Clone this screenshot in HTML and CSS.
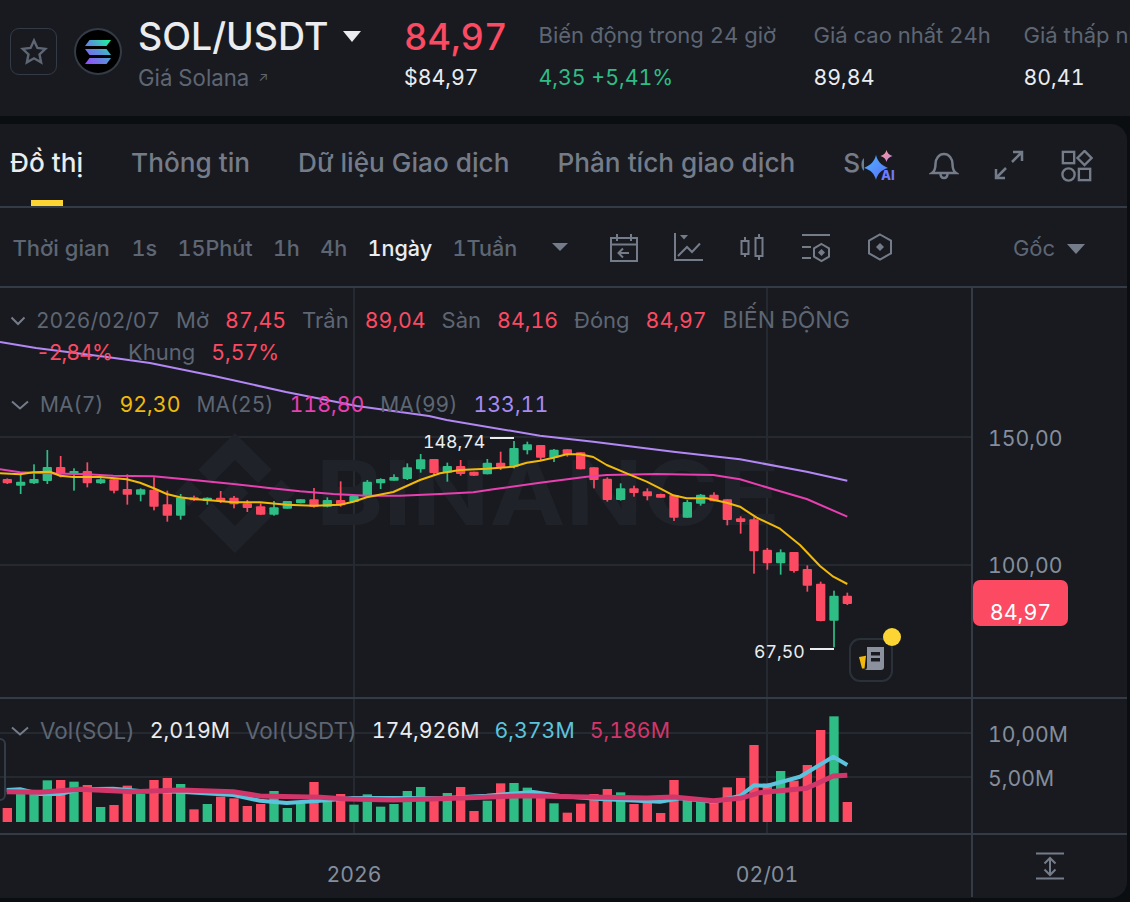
FILE: index.html
```html
<!DOCTYPE html>
<html lang="vi">
<head>
    <meta charset="UTF-8">
    <meta name="viewport" content="width=device-width, initial-scale=1.0">
    <title>SOL/USDT</title>
    <link rel="stylesheet" href="styles.css">
</head>
<body>
    <header class="ticker">
        <button class="fav">
            <svg viewBox="0 0 28 28" width="28" height="28"><path class="ico ico-thick" d="M14 2.500l3.400 7.400 8 .9-5.900 5.500 1.600 8-7.100-4-7.100 4 1.600-8-5.900-5.500 8-.9z"/></svg>
        </button>
        <div class="coin">
            <svg viewBox="0 0 26 24" width="26" height="24">
                <defs>
                    <linearGradient id="sol" x1="0" y1="1" x2="1" y2="0">
                        <stop offset="0" stop-color="#9945ff"/>
                        <stop offset="0.55" stop-color="#5497d5"/>
                        <stop offset="1" stop-color="#19fb9b"/>
                    </linearGradient>
                </defs>
                <path fill="url(#sol)" d="M4.500 0H26l-4.500 6H0zM0 9h21.500L26 15H4.500zM4.500 18H26l-4.500 6H0z"/>
            </svg>
        </div>
        <div class="col col-name">
            <div class="pair">SOL/USDT <i class="caret caret-lg"></i></div>
            <div class="sub">Giá Solana <span class="ext">↗</span></div>
        </div>
        <div class="col col-price">
            <div class="last">84,97</div>
            <div class="fiat">$84,97</div>
        </div>
        <div class="col stat stat-change">
            <div class="stat-label">Biến động trong 24 giờ</div>
            <div class="stat-val green">4,35 +5,41%</div>
        </div>
        <div class="col stat stat-high">
            <div class="stat-label">Giá cao nhất 24h</div>
            <div class="stat-val">89,84</div>
        </div>
        <div class="col stat">
            <div class="stat-label">Giá thấp nhất 24h</div>
            <div class="stat-val">80,41</div>
        </div>
    </header>

    <main class="panel">
        <nav class="tabs">
            <div class="tab-list">
                <a class="tab active">Đồ thị</a>
                <a class="tab">Thông tin</a>
                <a class="tab">Dữ liệu Giao dịch</a>
                <a class="tab">Phân tích giao dịch</a>
                <a class="tab">Square</a>
            </div>
            <svg class="ai" viewBox="0 0 38 34" width="38" height="34">
                <defs>
                    <linearGradient id="aiBlue" x1="0" y1="0" x2="1" y2="1">
                        <stop offset="0" stop-color="#4fb4ff"/>
                        <stop offset="1" stop-color="#5a6dfb"/>
                    </linearGradient>
                    <linearGradient id="aiPink" x1="0" y1="0" x2="1" y2="1">
                        <stop offset="0" stop-color="#f9a27c"/>
                        <stop offset="1" stop-color="#c77cf5"/>
                    </linearGradient>
                </defs>
                <path fill="url(#aiBlue)" d="M13 5c1.500 6 5 10 12 13-7 2-10.500 6-12 12-1.500-6-5-10-12-12 7-3 10.500-7 12-13z"/>
                <path fill="url(#aiPink)" d="M23.500 0c.7 3 2.500 5 6 6-3.500 1-5.300 3-6 6-.7-3-2.500-5-6-6 3.500-1 5.300-3 6-6z"/>
                <text class="ai-text" x="18" y="30">AI</text>
            </svg>
            <svg class="tab-ico tab-bell" viewBox="0 0 30 30" width="30" height="30">
                <path class="ico" d="M3 23c3-2 3.500-4.500 3.500-9C6.500 8.500 10 4 15 4s8.500 4.500 8.500 10c0 4.500.5 7 3.500 9zM11.500 23.500c0 6 7 6 7 0"/>
            </svg>
            <svg class="tab-ico tab-expand" viewBox="0 0 30 30" width="30" height="30">
                <path class="ico" d="M2 28l10-10M18 12L28 2M19 2h9v9M2 19v9h9"/>
            </svg>
            <svg class="tab-ico tab-apps" viewBox="0 0 34 34" width="32" height="32">
                <rect class="ico" x="2" y="2" width="12" height="12"/>
                <path class="ico" d="M25 1l7.500 7.500L25 16l-7.500-7.500z"/>
                <circle class="ico" cx="8" cy="26" r="6.500"/>
                <rect class="ico" x="19" y="20" width="12" height="12"/>
            </svg>
        </nav>

        <div class="toolbar">
            <span class="range range-label">Thời gian</span>
            <span class="range">1s</span>
            <span class="range">15Phút</span>
            <span class="range">1h</span>
            <span class="range">4h</span>
            <span class="range active">1ngày</span>
            <span class="range">1Tuần</span>
            <i class="caret caret-more"></i>
            <div class="tools">
                <svg viewBox="0 0 32 32" width="32" height="32">
                    <path class="ico" d="M3 7h26v23H3zM3 13.500h26M9 3v7M23 3v7M21 22H11M15 17.500L10.500 22l4.500 4.500"/>
                </svg>
                <svg viewBox="0 0 32 32" width="32" height="32">
                    <path class="ico" d="M3 2v27h28M6 25l9-9 5 5 8-8.500"/>
                    <path class="ico-fill" d="M8 4h8l-4 4.500z"/>
                </svg>
                <svg viewBox="0 0 32 32" width="32" height="32">
                    <path class="ico" d="M9 6v20M23 3v26"/>
                    <rect class="ico ico-bg" x="5.500" y="10" width="7" height="13"/>
                    <rect class="ico ico-bg" x="19.500" y="7" width="7" height="18"/>
                </svg>
                <svg viewBox="0 0 32 32" width="32" height="32">
                    <path class="ico" d="M2 4h28M2 16h9M2 27h9M21.500 13l7.500 4.300v8.400L21.500 30 14 25.700v-8.400z"/>
                    <path class="ico-fill" d="M21.500 18l3.500 3.500-3.500 3.500-3.500-3.500z"/>
                </svg>
                <svg viewBox="0 0 32 32" width="32" height="32">
                    <path class="ico" d="M16 3.500l11 6.200v12.600l-11 6.200-11-6.200V9.700z"/>
                    <path class="ico-fill" d="M16 12l4 4-4 4-4-4z"/>
                </svg>
            </div>
            <div class="scale">Gốc <i class="caret caret-scale"></i></div>
        </div>

        <section class="chart">
            <svg id="plot" class="plot" viewBox="0 288 1127 610" width="1127" height="610"></svg>

            <div class="legend legend-ohlc">
                <svg class="chev" viewBox="0 0 16 10" width="16" height="10"><path class="ico" d="M1.500 1.500L8 8l6.500-6.500"/></svg>
                <div class="legend-items">
                    <span class="num">2026/02/07</span><span>Mở</span><b class="red">87,45</b><span>Trần</span><b class="red">89,04</b><span>Sàn</span><b class="red">84,16</b><span>Đóng</span><b class="red">84,97</b><span class="wide">BIẾN ĐỘNG</span>
                    <b class="red pct">-2,84%</b><span>Khung</span><b class="red">5,57%</b>
                </div>
            </div>
            <div class="legend legend-ma">
                <svg class="chev" viewBox="0 0 20 10" width="20" height="10"><path class="ico" d="M2 1.500L10 8.500l8-7"/></svg>
                <div class="legend-items">
                    <span class="num">MA(7)</span><b class="ma7">92,30</b><span class="num">MA(25)</span><b class="ma25">118,80</b><span class="num">MA(99)</span><b class="ma99">133,11</b>
                </div>
            </div>
            <div class="legend legend-vol">
                <svg class="chev" viewBox="0 0 20 10" width="20" height="10"><path class="ico" d="M2 1.500L10 8.500l8-7"/></svg>
                <div class="legend-items">
                    <span class="vol-label">Vol(SOL)</span><b class="white">2,019M</b><span class="vol-label">Vol(USDT)</span><b class="white">174,926M</b><b class="vol-a">6,373M</b><b class="vol-b">5,186M</b>
                </div>
            </div>

            <div class="price-tag">84,97</div>
            <div class="news-btn">
                <svg viewBox="0 0 26 26" width="26" height="26">
                    <path fill="#f0b90b" d="M1 10l7-1.200-1.500 12.700H4z"/>
                    <path fill="#8b929e" d="M9 0h17v20c0 2-1 3-3 3H6c2 0 3-1 3-3z"/>
                    <path fill="#181a20" d="M13 5h9v3.500h-9zM13 11h9v3.500h-9z"/>
                </svg>
                <i class="news-dot"></i>
            </div>
        </section>
    </main>
    <script src="chart.js"></script>
</body>
</html>
```

FILE: styles.css
```css
* {
    box-sizing: border-box;
}

body {
    margin: 0;
    width: 1130px;
    height: 902px;
    overflow: hidden;
    background: #0b0e11;
    font-family: 'Inter', 'Noto Sans', sans-serif;
    font-variant-numeric: tabular-nums;
    color: #eaecef;
}

.green { color: #2ebd85; }
.red { color: #fb4a62; }
.white { color: #eaecef; }

.ico {
    fill: none;
    stroke: #757c89;
    stroke-width: 2;
}

.ico-thick {
    stroke: #5e6673;
    stroke-width: 2.4;
}

.ico-bg {
    fill: #181a20;
}

.ico-fill {
    fill: #757c89;
}

.caret {
    display: inline-block;
    width: 0;
    height: 0;
    border-style: solid;
    border-color: #757c89 transparent transparent;
}

/* top ticker */
.ticker {
    display: flex;
    height: 116px;
    background: #181a20;
    padding: 28px 0 0 10px;
    overflow: hidden;
    white-space: nowrap;
}

.fav {
    width: 47px;
    height: 47px;
    flex: none;
    padding: 0;
    background: none;
    border: 1px solid #333b47;
    border-radius: 9px;
    display: flex;
    align-items: center;
    justify-content: center;
}

.coin {
    width: 48px;
    height: 47px;
    flex: none;
    margin-left: 17px;
    border: 2px solid #333b47;
    border-radius: 50%;
    background: #000;
    display: flex;
    align-items: center;
    justify-content: center;
}

.col {
    margin-top: -14px;
    flex: none;
}

.col-name {
    margin-left: 16px;
    width: 266px;
}

.pair {
    height: 44px;
    font-size: 37.5px;
    font-weight: 500;
    line-height: 46px;
    color: #eaecef;
}

.caret-lg {
    border-width: 11px 9px 0;
    border-top-color: #eaecef;
    margin-left: 4px;
    vertical-align: 8px;
}

.sub, .fiat, .stat-val {
    margin-top: 5px;
    height: 28px;
    line-height: 28px;
    font-size: 21.3px;
}

.sub {
    color: #5e6673;
    font-size: 22.2px;
}

.ext {
    font-size: 13px;
    margin-left: 3px;
    vertical-align: 4px;
}

.col-price {
    width: 134.500px;
}

.last {
    height: 44px;
    font-size: 36.2px;
    font-weight: 500;
    line-height: 46px;
    color: #fb4a62;
}

.stat-change {
    width: 275px;
}

.stat-high {
    width: 210px;
}

.stat-label {
    height: 44px;
    line-height: 42px;
    font-size: 22px;
    color: #5e6673;
}

/* panel */
.panel {
    width: 1127px;
    height: 774px;
    margin-top: 8px;
    background: #181a20;
    border-radius: 0 16px 16px 0;
    overflow: hidden;
}

.tabs {
    display: flex;
    align-items: flex-start;
    height: 84px;
    border-bottom: 2px solid #333b47;
}

.tab-list {
    display: flex;
    gap: 48px;
    width: 864px;
    flex: none;
    padding-left: 10px;
    overflow: hidden;
    white-space: nowrap;
}

.tab {
    position: relative;
    height: 82px;
    padding-top: 23px;
    font-size: 26.2px;
    font-weight: 500;
    line-height: 32px;
    color: #757c89;
}

.tab.active {
    color: #eaecef;
}

.tab.active::after {
    content: "";
    position: absolute;
    left: 21px;
    bottom: 0;
    width: 32px;
    height: 6px;
    background: #fcd535;
}

.ai {
    flex: none;
    margin: 26px 0 0 -1px;
}

.ai-text {
    font-size: 13px;
    font-weight: 800;
    fill: #6f7bf7;
}

.tab-ico .ico {
    stroke-width: 2.5;
}

.tab-bell {
    margin: 26px 0 0 28px;
}

.tab-expand {
    margin: 26px 0 0 35px;
}

.tab-apps {
    margin: 26px 0 0 37px;
}

.toolbar {
    display: flex;
    align-items: center;
    gap: 20.300px;
    height: 80px;
    padding: 0 42px 0 12.500px;
    border-bottom: 2px solid #333b47;
    font-size: 21.6px;
    font-weight: 500;
    color: #5e6673;
    white-space: nowrap;
}

.range {
    padding-top: 1px;
}

.range-label {
    margin-right: 1.500px;
    font-size: 22px;
}

.range.active {
    color: #eaecef;
}

.caret-more {
    border-width: 8px 8px 0;
    margin-left: 14px;
}

.tools {
    display: flex;
    gap: 32px;
    margin-left: 20px;
}

.scale {
    margin-left: auto;
    padding-top: 1px;
    font-size: 22px;
    font-weight: 400;
}

.caret-scale {
    border-width: 10px 9px 0;
    margin-left: 6px;
    vertical-align: 2px;
}

/* chart */
.chart {
    position: relative;
    height: 610px;
}

.plot {
    display: block;
}

.up { fill: #2ebd85; }
.down { fill: #fb4a62; }

.grid {
    stroke: #252a31;
    stroke-width: 2;
}

.divider {
    stroke: #333b47;
    stroke-width: 2;
}

.mark {
    fill: #1f2229;
}

.mark-text {
    font-size: 90px;
    font-weight: 700;
}

.ma-line {
    fill: none;
    stroke-width: 2;
    stroke-linejoin: round;
}

.axis {
    font-size: 21.2px;
    fill: #848e9c;
    dominant-baseline: central;
}

.time {
    font-size: 21.2px;
    fill: #848e9c;
    text-anchor: middle;
    dominant-baseline: central;
}

.extreme {
    font-size: 17.7px;
    fill: #eaecef;
    dominant-baseline: central;
}

.extreme-line {
    stroke: #eaecef;
    stroke-width: 2;
}

.legend {
    position: absolute;
    left: 10px;
    display: flex;
    align-items: flex-start;
    font-size: 22px;
    line-height: 31px;
    color: #5e6673;
}

.legend b {
    font-size: 21.3px;
    font-weight: 400;
}

.legend .pct {
    letter-spacing: -1px;
}

.legend .num {
    font-size: 21px;
}

.legend .wide {
    font-size: 23px;
}

.legend .vol-label {
    font-size: 22.4px;
}

.chev {
    flex: none;
    margin-top: 11px;
}

.legend-items {
    display: flex;
    flex-wrap: wrap;
    gap: 1px 16px;
    margin-left: 10px;
    white-space: nowrap;
}

.legend-ohlc {
    top: 17px;
    width: 860px;
}

.legend-ma {
    top: 101px;
}

.legend-vol {
    top: 427px;
}

.legend-vol .legend-items {
    column-gap: 15px;
}

.ma7 { color: #f0b90b; }
.ma25 { color: #e83fb1; }
.ma99 { color: #a98bf0; }
.vol-a { color: #5bc4dc; }
.vol-b { color: #d1366a; }

.price-tag {
    position: absolute;
    left: 973px;
    top: 292px;
    width: 95px;
    height: 46px;
    padding-top: 18px;
    background: #fb4a62;
    border-radius: 7px;
    color: #fff;
    font-size: 21.5px;
    line-height: 28px;
    text-align: center;
}

.news-btn {
    position: absolute;
    left: 849px;
    top: 350px;
    width: 44px;
    height: 44px;
    border: 2px solid #2b3139;
    border-radius: 11px;
    display: flex;
    align-items: center;
    justify-content: center;
}

.news-dot {
    position: absolute;
    right: -10px;
    top: -12px;
    width: 18px;
    height: 18px;
    border-radius: 50%;
    background: #fcd535;
}
```

FILE: chart.js
```js
const svg = document.getElementById('plot');
const NS = 'http://www.w3.org/2000/svg';

function add(tag, attrs, text) {
    const el = document.createElementNS(NS, tag);
    for (const k in attrs) el.setAttribute(k, attrs[k]);
    if (text) el.textContent = text;
    svg.appendChild(el);
    return el;
}

const STEP = 40 / 3;
const BAR = 28 / 3;
const cx = i => 7.33 + STEP * i;
// candle y values are thirds of a pixel below y=420
const py = v => 420 + v / 3;

// colour, high, top of body, bottom of body, low
const candles = [
    ['r',175,177,190,192],['g',165,185,197,222],['g',133,177,190,192],['g',90,141,183,192],
    ['r',108,141,162,172],['g',145,153,160,212],['r',127,153,190,202],['g',170,178,190,192],
    ['r',175,178,212,220],['r',163,207,224,254],['g',205,208,224,244],['r',172,209,260,271],
    ['r',212,253,287,305],['g',222,232,287,299],['r',227,232,241,243],['g',232,233,243,254],
    ['r',213,233,244,249],['r',228,233,253,265],['r',240,250,264,276],['r',250,259,284,285],
    ['g',243,262,284,287],['g',243,243,266,266],['g',238,238,250,250],['r',204,238,260,263],
    ['g',232,240,260,262],['r',184,240,256,260],['g',225,228,246,246],['g',180,185,228,232],
    ['g',175,177,190,207],['g',163,171,182,182],['g',130,142,177,180],['g',102,118,148,158],
    ['r',117,117,159,168],['g',128,138,158,185],['r',120,138,162,167],['r',155,155,167,168],
    ['g',117,128,163,163],['r',95,128,141,150],['g',63,84,140,145],['g',65,73,91,103],
    ['r',75,75,113,120],['g',87,89,113,126],['r',88,88,105,110],['r',97,97,148,148],
    ['r',142,142,180,205],['r',172,176,240,245],['g',190,205,240,242],['r',197,205,219,230],
    ['r',205,214,229,241],['r',221,222,233,233],['r',225,225,293,303],['g',240,246,293,293],
    ['g',222,224,251,257],['r',217,224,244,244],['r',238,238,300,316],['r',289,295,306,341],
    ['r',292,298,394,461],['r',384,389,430,449],['g',388,397,430,464],['r',396,396,453,458],
    ['r',436,447,497,515],['r',485,491,603,604],['g',512,527,602,682],['r',518,527,552,555]
];

// top of each volume bar, thirds of a pixel below y=710, same order as candles
const volumes = [
    294,250,252,211,210,215,225,291,285,227,252,210,204,222,298,282,
    260,265,288,282,243,294,280,216,270,252,284,253,290,282,243,231,
    272,249,231,303,272,220,219,233,262,280,308,281,252,237,247,282,
    270,309,210,265,275,270,232,204,105,220,183,212,165,60,19,276
];

function pts(list, x0, y0) {
    const out = [];
    for (let i = 0; i < list.length; i += 2) {
        out.push((x0 + list[i] / 3).toFixed(1) + ',' + (y0 + list[i + 1] / 3).toFixed(1));
    }
    return out;
}

const ma7 = pts([0,160,60,163,100,157,150,155,180,167,220,171,300,171,380,178,420,188,460,204,500,222,540,232,580,237,620,240,700,247,780,247,860,254,940,257,1020,254,1060,245,1100,232,1180,216,1260,180,1320,160], 0, 420)
    .concat(pts([60,150,140,146,220,140,260,128,300,122,340,113,380,103,420,103,460,111,500,135,560,160,620,185,660,205,700,226,740,235,800,235,860,248,900,260,950,293,1020,326,1080,375,1140,438,1180,470,1222,492], 440, 420));
const ma25 = pts([0,148,60,157,140,160,260,163,340,167,460,169,580,180,700,192,800,203,900,214,1000,222,1100,227,1200,227,1320,222], 0, 420)
    .concat(pts([100,217,160,208,300,188,440,170,500,165,650,162,820,165,900,178,1000,208,1100,237,1222,290], 440, 420));
const ma99 = ['0,342','36,348','107,357','150,363','214,376','286,392','357,406','429,416']
    .concat(pts([20,0,300,47,460,65,700,95,900,118,1100,155,1222,182], 440, 420));

const volA = pts([20,240,60,238,120,252,180,252,240,238,340,236,420,243,540,245,700,255,780,272,860,279,960,272,1060,264,1180,264,1320,265], 0, 710)
    .concat(pts([140,257,280,246,360,258,480,267,660,275,720,265,820,275,900,258,942,226,980,228,1080,200,1180,140,1222,165], 440, 710));
const volB = pts([20,245,120,247,240,238,400,245,540,240,700,245,780,258,960,262,1040,267,1180,270,1320,266], 0, 710)
    .concat(pts([260,257,400,260,620,264,700,261,820,272,900,265,960,248,1100,235,1180,198,1222,196], 440, 710));

// grid
[437, 565, 733, 777].forEach(y => add('line', { class: 'grid', x1: 0, x2: 971, y1: y, y2: y }));
[354, 767].forEach(x => add('line', { class: 'grid', x1: x, x2: x, y1: 288, y2: 833 }));

// watermark
add('path', {
    class: 'mark',
    transform: 'translate(175 433) scale(5)',
    d: 'M16.624 13.92l2.718 2.716-7.353 7.353-7.353-7.352 2.717-2.717 4.636 4.66 4.635-4.66zm4.637-4.637L24 12l-2.715 2.716L18.568 12l2.693-2.717zm-9.272.001l2.716 2.692-2.716 2.717L9.272 12l2.716-2.716zm-9.272-.001L5.409 12l-2.691 2.692L0 12l2.716-2.717zM11.989.012l7.353 7.328-2.718 2.716-4.635-4.636-4.636 4.66-2.717-2.716L11.989.012z'
});
add('text', { class: 'mark mark-text', x: 316, y: 525, textLength: 464, lengthAdjust: 'spacingAndGlyphs' }, 'BINANCE');

// candles
candles.forEach((c, i) => {
    const cls = c[0] === 'g' ? 'up' : 'down';
    add('rect', { class: cls, x: cx(i) - 0.85, y: py(c[1]), width: 1.7, height: (c[4] - c[1]) / 3 });
    add('rect', { class: cls, x: cx(i) - BAR / 2, y: py(c[2]), width: BAR, height: Math.max((c[3] - c[2]) / 3, 2), rx: 1 });
    add('rect', { class: cls, x: cx(i) - BAR / 2, y: 710 + volumes[i] / 3, width: BAR, height: 822 - 710 - volumes[i] / 3 });
});

// moving averages
add('polyline', { class: 'ma-line', stroke: '#b388f5', points: ma99.join(' ') });
add('polyline', { class: 'ma-line', stroke: '#e83fb1', points: ma25.join(' ') });
add('polyline', { class: 'ma-line', stroke: '#f0b90b', points: ma7.join(' ') });
add('polyline', { class: 'ma-line', stroke: '#5bc4dc', style: 'stroke-width:4', points: volA.join(' ') });
add('polyline', { class: 'ma-line', stroke: '#d1366a', style: 'stroke-width:5', points: volB.join(' ') });

// high and low markers
add('text', { class: 'extreme', x: 423, y: 441 }, '148,74');
add('line', { class: 'extreme-line', x1: 490, x2: 514, y1: 438, y2: 438 });
add('text', { class: 'extreme', x: 754, y: 651 }, '67,50');
add('line', { class: 'extreme-line', x1: 810, x2: 834, y1: 649, y2: 649 });

// dividers
add('line', { class: 'divider', x1: 0, x2: 1127, y1: 698, y2: 698 });
add('line', { class: 'divider', x1: 0, x2: 1127, y1: 834, y2: 834 });
add('line', { class: 'divider', x1: 972, x2: 972, y1: 288, y2: 897 });
add('rect', { class: 'ico', x: -10, y: 739, width: 15, height: 61, rx: 5, style: 'stroke:#333b47' });

// axes
add('text', { class: 'axis', x: 988, y: 438 }, '150,00');
add('text', { class: 'axis', x: 988, y: 565 }, '100,00');
add('text', { class: 'axis', x: 988, y: 734 }, '10,00M');
add('text', { class: 'axis', x: 988, y: 778 }, '5,00M');
add('text', { class: 'time', x: 354, y: 874 }, '2026');
add('text', { class: 'time', x: 767, y: 874 }, '02/01');
add('path', { class: 'ico', d: 'M1036 853.500h28M1036 878.500h28M1050 858v17M1044.500 863.500l5.500-5.500 5.500 5.500M1044.500 869.500l5.500 5.500 5.500-5.500' });
```
